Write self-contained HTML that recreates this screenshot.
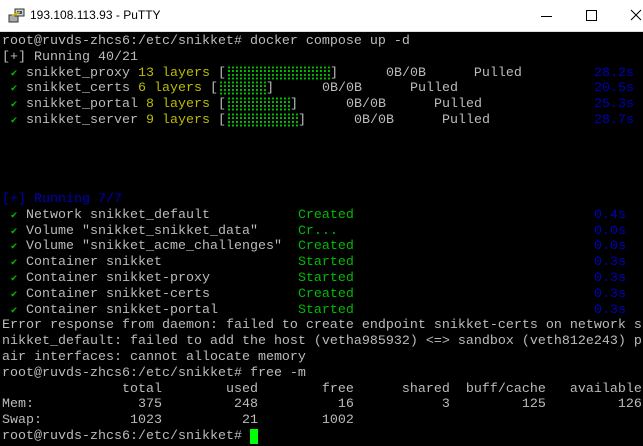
<!DOCTYPE html>
<html><head><meta charset="utf-8"><style>
html,body{margin:0;padding:0;width:643px;height:446px;overflow:hidden;background:#000}
#title{position:absolute;left:0;top:0;width:643px;height:31px;background:#fff;border-bottom:1px solid #ddd;font-family:"Liberation Sans",sans-serif;font-size:12px;color:#000}
#title .t{position:absolute;left:30px;top:8px}
#term{position:absolute;left:2px;top:34px;font-family:"Liberation Mono","DejaVu Sans Mono",monospace;font-size:13.33px;line-height:15.8px;color:#bbb;white-space:pre}
.l{height:15.8px;position:relative}
.y{color:#bbbb00}.g{color:#00bb00}.b{color:#0000bb}
.c{color:#00bb00;display:inline-block;width:8px;font-size:9px;font-family:"DejaVu Sans",sans-serif;text-align:center}
.bb{color:#00bb00;display:inline-block;width:8px;overflow:hidden;font-family:"DejaVu Sans Mono",monospace;vertical-align:top}
.r{position:absolute;left:592px;top:0}
.cur{display:inline-block;width:8px;height:15px;background:#00ff00;vertical-align:top}
</style></head><body>
<div id="title">
<svg style="position:absolute;left:8px;top:7px" width="18" height="18" viewBox="0 0 18 18"><rect x="1" y="8" width="9" height="7" fill="#aaa" stroke="#333"/><rect x="7" y="2" width="9" height="7" fill="#ccc" stroke="#333"/><rect x="9" y="4" width="5" height="3" fill="#258"/><path d="M4 9 L12 5" stroke="#d4b000" stroke-width="2"/></svg>
<span class="t">193.108.113.93 - PuTTY</span>
<div style="position:absolute;left:541px;top:16px;width:11px;height:1px;background:#000"></div>
<div style="position:absolute;left:586px;top:10px;width:9px;height:9px;border:1px solid #000"></div>
<svg style="position:absolute;left:630px;top:9px" width="13" height="12"><path d="M1 1 L11 11 M11 1 L1 11" stroke="#000" stroke-width="1"/></svg>
</div>
<div id="term"><div class="l">root@ruvds-zhcs6:/etc/snikket# docker compose up -d</div><div class="l">[+] Running 40/21</div><div class="l"> <span class="c">✔</span> snikket_proxy <span class="y">13 layers</span> [<span class="g"><span class="bb">⣿</span><span class="bb">⣿</span><span class="bb">⣿</span><span class="bb">⣿</span><span class="bb">⣿</span><span class="bb">⣿</span><span class="bb">⣿</span><span class="bb">⣿</span><span class="bb">⣿</span><span class="bb">⣿</span><span class="bb">⣿</span><span class="bb">⣿</span><span class="bb">⣿</span></span>]      0B/0B      Pulled<span class="r b">28.2s</span></div><div class="l"> <span class="c">✔</span> snikket_certs <span class="y">6 layers</span> [<span class="bb">⣿</span><span class="bb">⣿</span><span class="bb">⣿</span><span class="bb">⣿</span><span class="bb">⣿</span><span class="bb">⣿</span>]      0B/0B      Pulled<span class="r b">20.5s</span></div><div class="l"> <span class="c">✔</span> snikket_portal <span class="y">8 layers</span> [<span class="bb">⣿</span><span class="bb">⣿</span><span class="bb">⣿</span><span class="bb">⣿</span><span class="bb">⣿</span><span class="bb">⣿</span><span class="bb">⣿</span><span class="bb">⣿</span>]      0B/0B      Pulled<span class="r b">25.3s</span></div><div class="l"> <span class="c">✔</span> snikket_server <span class="y">9 layers</span> [<span class="bb">⣿</span><span class="bb">⣿</span><span class="bb">⣿</span><span class="bb">⣿</span><span class="bb">⣿</span><span class="bb">⣿</span><span class="bb">⣿</span><span class="bb">⣿</span><span class="bb">⣿</span>]      0B/0B      Pulled<span class="r b">28.7s</span></div><div class="l"></div><div class="l"></div><div class="l"></div><div class="l"></div><div class="l b">[+] Running 7/7</div><div class="l"> <span class="c">✔</span> Network snikket_default           <span class="g">Created</span><span class="r b">0.4s</span></div><div class="l"> <span class="c">✔</span> Volume "snikket_snikket_data"     <span class="g">Cr...</span><span class="r b">0.0s</span></div><div class="l"> <span class="c">✔</span> Volume "snikket_acme_challenges"  <span class="g">Created</span><span class="r b">0.0s</span></div><div class="l"> <span class="c">✔</span> Container snikket                 <span class="g">Started</span><span class="r b">0.3s</span></div><div class="l"> <span class="c">✔</span> Container snikket-proxy           <span class="g">Started</span><span class="r b">0.3s</span></div><div class="l"> <span class="c">✔</span> Container snikket-certs           <span class="g">Created</span><span class="r b">0.3s</span></div><div class="l"> <span class="c">✔</span> Container snikket-portal          <span class="g">Started</span><span class="r b">0.3s</span></div><div class="l">Error response from daemon: failed to create endpoint snikket-certs on network s</div><div class="l">nikket_default: failed to add the host (vetha985932) &lt;=&gt; sandbox (veth812e243) p</div><div class="l">air interfaces: cannot allocate memory</div><div class="l">root@ruvds-zhcs6:/etc/snikket# free -m</div><div class="l">               total        used        free      shared  buff/cache   available</div><div class="l">Mem:             375         248          16           3         125         126</div><div class="l">Swap:           1023          21        1002</div><div class="l">root@ruvds-zhcs6:/etc/snikket# <span class="cur"></span></div></div>
</body></html>
